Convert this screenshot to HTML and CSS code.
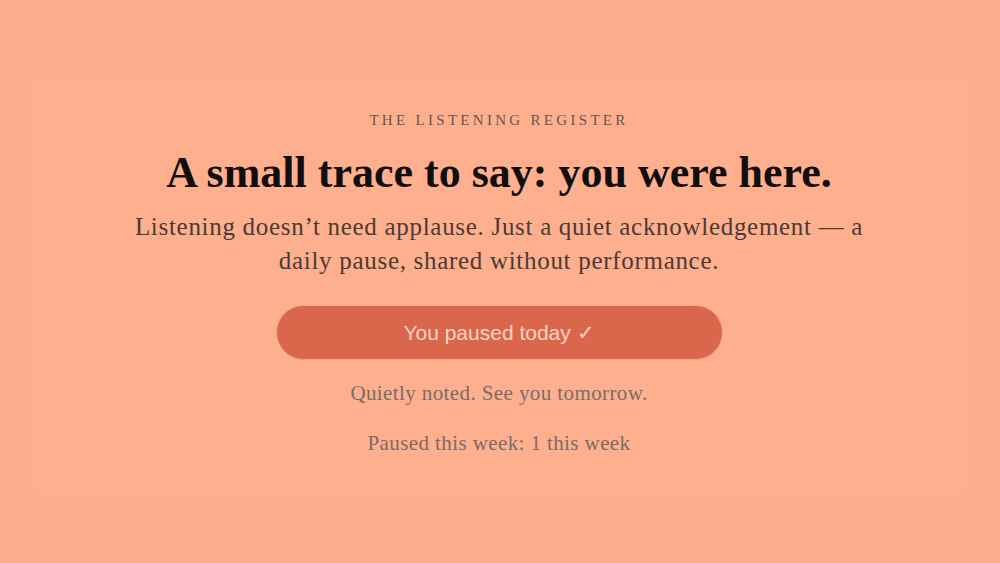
FILE: index.html
```html
<!DOCTYPE html>
<html lang="en">
<head>
<meta charset="utf-8">
<title>The Listening Register</title>
<link rel="stylesheet" href="styles.css">
</head>
<body>
<main class="page">
  <section class="card">
    <p class="eyebrow">THE LISTENING REGISTER</p>
    <h1 class="title">A small trace to say: you were here.</h1>
    <p class="lede">Listening doesn’t need applause. Just a quiet acknowledgement — a daily pause, shared without performance.</p>
    <button class="pause-btn" type="button">You paused today ✓</button>
    <p class="note">Quietly noted. See you tomorrow.</p>
    <p class="count">Paused this week: 1 this week</p>
  </section>
</main>
</body>
</html>
```
FILE: styles.css
```css
html, body {
  margin: 0;
  padding: 0;
}
body {
  background: #feae8c;
  font-family: "Liberation Serif", "DejaVu Serif", serif;
  width: 1000px;
  height: 563px;
  overflow: hidden;
}
.page {
  display: flex;
  justify-content: center;
  padding-top: 80px;
}
.card {
  width: 926px;
  margin-left: -2px;
  height: 411px;
  box-sizing: border-box;
  background: rgba(255, 255, 255, 0.025);
  border-radius: 4px;
  display: flex;
  flex-direction: column;
  align-items: center;
  padding-top: 30px;
}
.eyebrow {
  margin: 0;
  font-size: 15px;
  line-height: 20px;
  letter-spacing: 3.3px;
  color: #6b5550;
}
.title {
  margin: 17px 0 0;
  font-size: 44px;
  line-height: 52px;
  font-weight: 700;
  color: #120e0d;
}
.lede {
  margin: 11px 0 0;
  width: 745px;
  text-align: center;
  font-size: 25px;
  line-height: 34px;
  letter-spacing: 0.7px;
  color: #4a3b36;
}
.pause-btn {
  margin-top: 27px;
  width: 447px;
  height: 55px;
  border-radius: 28px;
  border: 1px solid #efa48c;
  background: #da674c;
  color: #fbd3c2;
  font-family: "Liberation Sans", Arial, sans-serif;
  font-size: 21px;
  cursor: pointer;
}
.note {
  margin: 21px 0 0;
  font-size: 21px;
  line-height: 24px;
  letter-spacing: 0.4px;
  color: #7a6c68;
}
.count {
  margin: 26px 0 0;
  font-size: 21px;
  line-height: 24px;
  letter-spacing: 0.4px;
  color: #7a6c68;
}
```
